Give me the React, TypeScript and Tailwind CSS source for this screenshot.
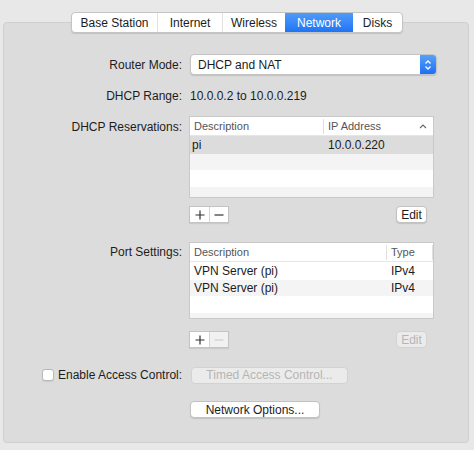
import React from "react";

const font = { fontFamily: '"Liberation Sans", Arial, sans-serif' };

const tabs = ["Base Station", "Internet", "Wireless", "Network", "Disks"];
const tabWidths = ["w-[85px]", "w-[65px]", "w-[63px]", "w-[68px]", "w-[49px]"];

function Tabs() {
  return (
    <div className="relative z-10 flex justify-center pt-[12px]">
      <div className="flex h-[21px] rounded-[4px] border border-[#c4c4c4] bg-white shadow-[0_1px_1px_rgba(0,0,0,0.12)] overflow-hidden">
        {tabs.map((t, i) => (
          <div
            key={t}
            className={`${tabWidths[i]} flex items-center justify-center text-[12px] ${
              t === "Network"
                ? "bg-gradient-to-b from-[#4f9bf9] to-[#1f74f5] text-white"
                : "text-[#1c1c1c]"
            } ${i > 0 && t !== "Network" && tabs[i - 1] !== "Network" ? "border-l border-[#e2e2e2]" : ""}`}
          >
            {t}
          </div>
        ))}
      </div>
    </div>
  );
}

function Label({ children, className = "" }: { children: React.ReactNode; className?: string }) {
  return (
    <div className={`w-[179px] shrink-0 text-right pr-[1px] text-[12px] text-[#1c1c1c] ${className}`}>
      {children}
    </div>
  );
}

function PushButton({
  children,
  disabled,
  className = "",
}: {
  children: React.ReactNode;
  disabled?: boolean;
  className?: string;
}) {
  return (
    <div
      className={`flex items-center justify-center rounded-[4px] border text-[12px] ${
        disabled
          ? "border-[#d2d2d2] bg-[#ebebeb] text-[#b5b5b5]"
          : "border-[#c2c2c2] bg-white text-[#1c1c1c] shadow-[0_1px_1px_rgba(0,0,0,0.12)]"
      } ${className}`}
    >
      {children}
    </div>
  );
}

function PlusMinus({ minusDisabled }: { minusDisabled?: boolean }) {
  return (
    <div className="flex h-[17px] border border-[#c4c4c4] bg-white shadow-[0_1px_1px_rgba(0,0,0,0.08)]">
      <div className="w-[19px] flex items-center justify-center">
        <svg width="10" height="10" viewBox="0 0 10 10">
          <path d="M5 0.5V9.5M0.5 5H9.5" stroke="#333" strokeWidth="1.2" />
        </svg>
      </div>
      <div
        className={`w-[19px] flex items-center justify-center border-l border-[#d4d4d4] ${
          minusDisabled ? "bg-[#f1f1f1]" : ""
        }`}
      >
        <svg width="10" height="10" viewBox="0 0 10 10">
          <path d="M0.5 5H9.5" stroke={minusDisabled ? "#cfcfcf" : "#333"} strokeWidth="1.2" />
        </svg>
      </div>
    </div>
  );
}

function ReservationsTable() {
  return (
    <div className="w-[245px] h-[82px] border border-[#c9c9c9] bg-white flex flex-col">
      <div className="h-[19px] flex items-center text-[11px] text-[#555] border-b border-[#e6e6e6] shrink-0">
        <div className="w-[134px] pl-[4px] border-r border-[#e0e0e0] h-[15px] leading-[15px]">Description</div>
        <div className="flex-1 pl-[4px]">IP Address</div>
        <div className="pr-[6px]">
          <svg width="8" height="6" viewBox="0 0 8 6">
            <path d="M1 5L4 2L7 5" stroke="#666" strokeWidth="1.1" fill="none" />
          </svg>
        </div>
      </div>
      <div className="h-[18px] flex items-center bg-[#dcdcdc] text-[12px] text-[#1c1c1c] shrink-0">
        <div className="w-[134px] pl-[2px]">pi</div>
        <div className="pl-[4px]">10.0.0.220</div>
      </div>
      <div className="h-[16px] bg-[#f4f4f4] shrink-0" />
      <div className="h-[17px] bg-white shrink-0" />
      <div className="flex-1 bg-[#f4f4f4]" />
    </div>
  );
}

function PortTable() {
  const rows = [
    { bg: "bg-white", h: "h-[18px]" },
    { bg: "bg-[#f4f4f4]", h: "h-[16px]" },
  ];
  return (
    <div className="w-[245px] h-[77px] border border-[#c9c9c9] bg-white flex flex-col">
      <div className="h-[19px] flex items-center text-[11px] text-[#555] border-b border-[#e6e6e6] shrink-0">
        <div className="w-[197px] pl-[4px] border-r border-[#e0e0e0] h-[15px] leading-[15px]">Description</div>
        <div className="flex-1 pl-[4px] border-r border-[#e0e0e0] h-[15px] leading-[15px]">Type</div>
      </div>
      {rows.map((r, i) => (
        <div key={i} className={`${r.h} ${r.bg} flex items-center text-[12px] text-[#1c1c1c] shrink-0`}>
          <div className="w-[197px] pl-[4px]">VPN Server (pi)</div>
          <div className="pl-[4px]">IPv4</div>
        </div>
      ))}
      <div className="h-[17px] bg-white shrink-0" />
      <div className="flex-1 bg-[#f4f4f4]" />
    </div>
  );
}

export default function App() {
  return (
    <div className="w-[474px] h-[450px] bg-[#e8e8e8] overflow-hidden" style={font}>
      <Tabs />
      <div className="ml-[3px] mt-[-11px] w-[466px] h-[421px] rounded-[4px] border border-[#cfcfcf] bg-[#dcdcdc]">
        {/* Router Mode */}
        <div className="flex items-center mt-[31px]">
          <Label>Router Mode:</Label>
          <div className="ml-[7px] w-[247px] h-[21px] flex rounded-[4px] border border-[#c4c4c4] bg-white shadow-[0_1px_1px_rgba(0,0,0,0.12)] overflow-hidden">
            <div className="flex-1 flex items-center pl-[7px] text-[12px] text-[#1c1c1c]">DHCP and NAT</div>
            <div className="w-[16px] bg-gradient-to-b from-[#57a0fa] to-[#1c6ff5] flex items-center justify-center">
              <svg width="8" height="12" viewBox="0 0 8 12">
                <path d="M1.5 4.5L4 2L6.5 4.5M1.5 7.5L4 10L6.5 7.5" stroke="white" strokeWidth="1.3" fill="none" />
              </svg>
            </div>
          </div>
        </div>

        {/* DHCP Range */}
        <div className="flex items-center mt-[13px] h-[16px]">
          <Label>DHCP Range:</Label>
          <div className="ml-[7px] text-[12px] text-[#1c1c1c]">10.0.0.2 to 10.0.0.219</div>
        </div>

        {/* DHCP Reservations */}
        <div className="flex mt-[12px]">
          <Label className="pt-[2px]">DHCP Reservations:</Label>
          <div className="ml-[6px]">
            <ReservationsTable />
            <div className="flex justify-between items-center mt-[8px] w-[238px]">
              <PlusMinus />
              <PushButton className="w-[31px] h-[17px]">Edit</PushButton>
            </div>
          </div>
        </div>

        {/* Port Settings */}
        <div className="flex mt-[19px]">
          <Label className="pt-[1px]">Port Settings:</Label>
          <div className="ml-[6px]">
            <PortTable />
            <div className="flex justify-between items-center mt-[12px] w-[238px]">
              <PlusMinus minusDisabled />
              <PushButton disabled className="w-[31px] h-[17px]">
                Edit
              </PushButton>
            </div>
          </div>
        </div>

        {/* Access Control */}
        <div className="flex items-center mt-[18px]">
          <div className="w-[179px] pl-[38px] flex items-center gap-[4px] text-[12px] text-[#1c1c1c]">
            <div className="w-[12px] h-[12px] rounded-[3px] border border-[#b8b8b8] bg-white shadow-[0_1px_1px_rgba(0,0,0,0.08)]" />
            <span>Enable Access Control:</span>
          </div>
          <PushButton disabled className="ml-[8px] w-[157px] h-[17px]">
            Timed Access Control...
          </PushButton>
        </div>

        {/* Network Options */}
        <div className="flex mt-[17px] pl-[186px]">
          <PushButton className="w-[130px] h-[17px]">Network Options...</PushButton>
        </div>
      </div>
    </div>
  );
}
